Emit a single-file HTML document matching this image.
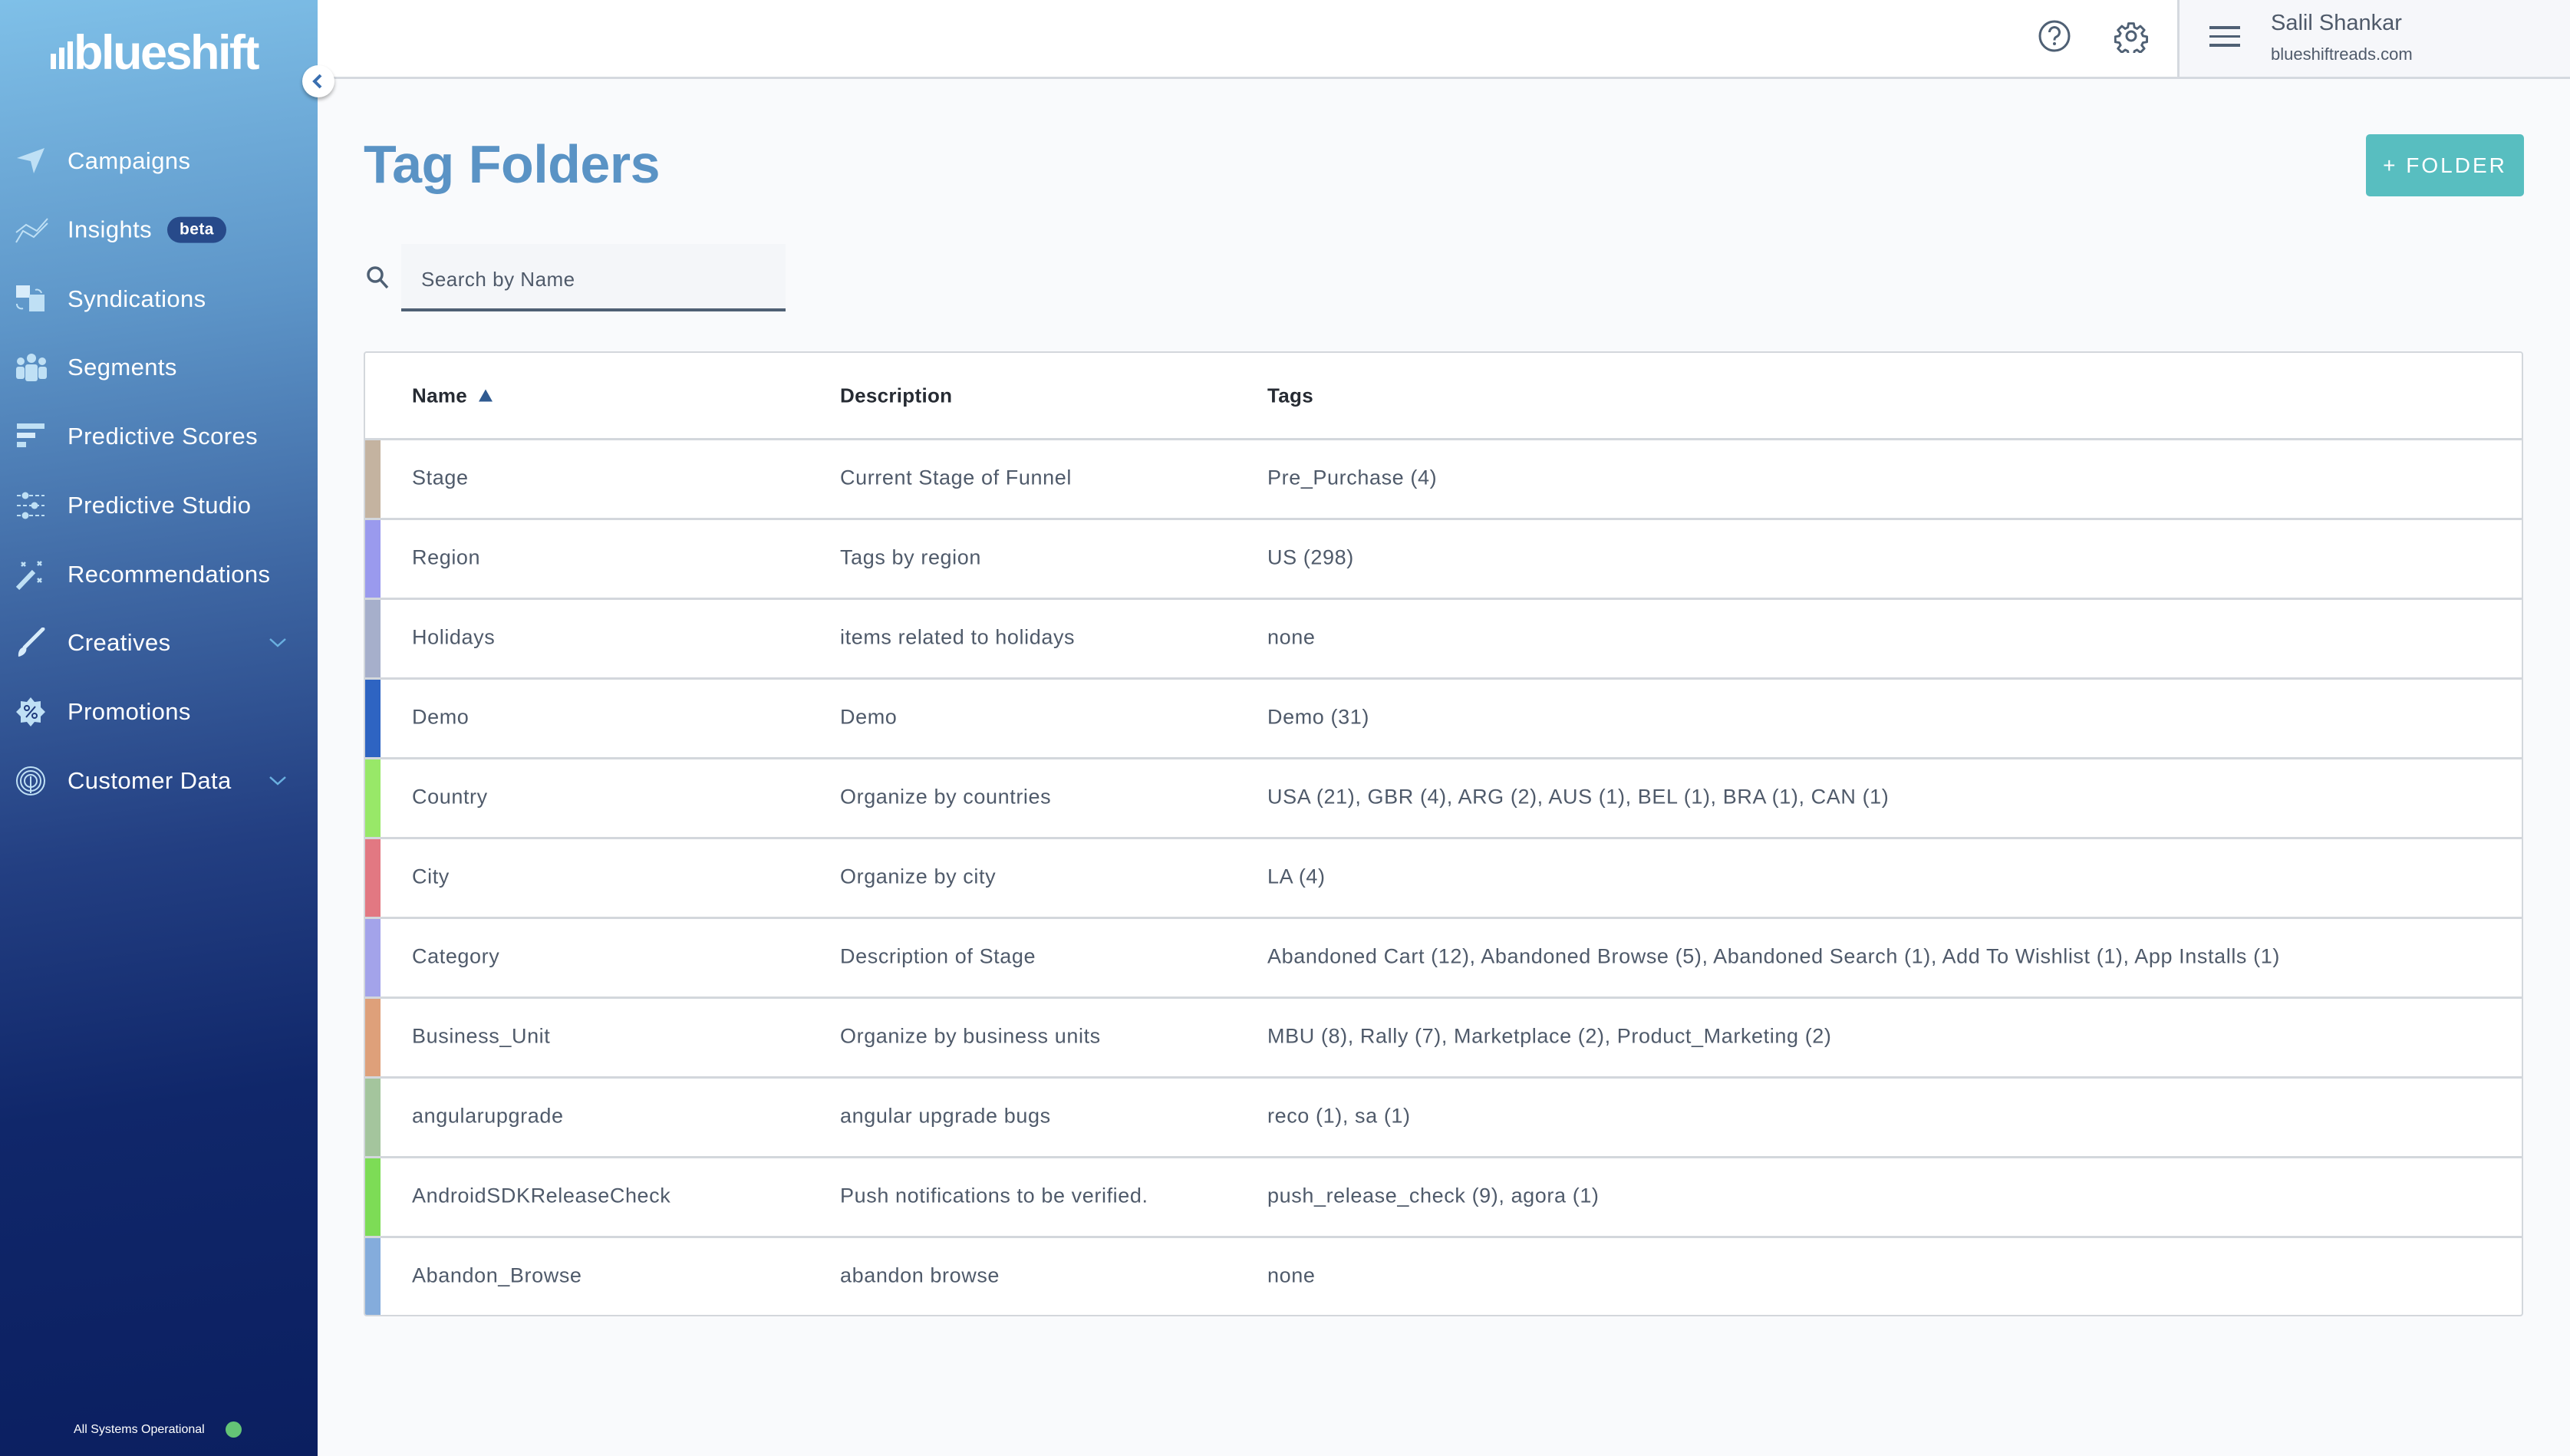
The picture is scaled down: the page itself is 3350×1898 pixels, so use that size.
<!DOCTYPE html>
<html><head><meta charset="utf-8"><style>
*{margin:0;padding:0;box-sizing:border-box}
body{width:3350px;height:1898px;overflow:hidden;background:#f9fafc;font-family:"Liberation Sans",sans-serif;position:relative}
#sb{position:absolute;left:0;top:0;width:414px;height:1898px;background:linear-gradient(172deg,#7fc0e8 0%,#5d95c8 22%,#3f68a4 40%,#233f82 58%,#10276a 75%,#0b1f60 100%)}
.logo{position:absolute;left:66px;top:36px;color:#fff;font-weight:bold;font-size:63px;letter-spacing:-2.5px;line-height:66px}
.bars{display:inline-block;vertical-align:baseline}
.nav{position:absolute;left:0;width:414px;height:60px;color:#fff;font-size:31px;letter-spacing:0.4px}
.nav .t{position:absolute;left:88px;top:50%;transform:translateY(-50%);white-space:nowrap}
.nav svg{position:absolute;left:20px;top:50%;transform:translateY(-50%)}
.chev{position:absolute;left:350px;top:50%;transform:translateY(-50%)}
.beta{display:inline-block;background:#274a8a;color:#fff;font-weight:bold;font-size:21px;padding:5px 16px;border-radius:20px;margin-left:20px;vertical-align:middle;position:relative;top:-2px}
#hdr{position:absolute;left:414px;top:0;width:2936px;height:103px;background:#fff;border-bottom:3px solid #d5d9df}
#hr{position:absolute;left:2838px;top:0;width:512px;height:100px;background:#f6f7fa;border-left:3px solid #d5d9df}
.coll{position:absolute;left:394px;top:85px;width:42px;height:42px;border-radius:50%;background:#fff;box-shadow:0 3px 5px rgba(0,0,0,.3)}
h1{position:absolute;left:474px;top:174px;font-size:70px;color:#5a93c5;font-weight:bold;letter-spacing:-0.5px}
.btn{position:absolute;left:3084px;top:175px;width:206px;height:81px;background:#58bec0;border-radius:5px;color:#fff;font-size:28px;letter-spacing:3px;text-align:center;line-height:81px}
.search{position:absolute;left:523px;top:318px;width:501px;height:88px;background:#f4f6f9;border-bottom:4px solid #4f6074}
.search span{position:absolute;left:26px;top:31px;font-size:26px;color:#4f5a6a;letter-spacing:0.5px}
#tbl{position:absolute;left:474px;top:458px;width:2815px;height:1258px;background:#fff;border:2px solid #d3d7dc;border-radius:4px;overflow:hidden}
.row{position:absolute;left:0;width:100%;height:104px;border-top:3px solid #d3d7dc}
.row .s{position:absolute;left:0;top:0;width:20px;height:101px}
.c{position:absolute;top:calc(50% - 2px);transform:translateY(-50%);font-size:27px;color:#4f5a6a;letter-spacing:0.6px;white-space:nowrap}
.c1{left:61px}.c2{left:619px}.c3{left:1176px}
.hd .c{font-weight:bold;color:#262b33;font-size:26px;letter-spacing:0.3px;top:calc(50% + 2px)}
</style></head><body>
<div id="sb">
 <div class="logo"><svg class="bars" width="30" height="40" viewBox="0 0 30 40"><rect x="0" y="20" width="7" height="20" fill="#fff"/><rect x="11" y="12" width="7" height="28" fill="#fff"/><rect x="22" y="4" width="7" height="36" fill="#fff"/></svg>blueshift</div>
 <div class="nav" style="top:180px"><svg width="40" height="40" viewBox="0 0 40 40"><path d="M2 16 L38 3 L24 36 L20 20 Z" fill="#bfe0f5"/></svg><span class="t">Campaigns</span></div>
 <div class="nav" style="top:270px"><svg width="44" height="34" viewBox="0 0 44 34"><path d="M1 33 L10 18 L24 26 L42 8 M1 20 L14 10 L28 18 L42 2" stroke="#bfe0f5" stroke-width="2" fill="none"/></svg><span class="t">Insights<span class="beta">beta</span></span></div>
 <div class="nav" style="top:360px"><svg width="40" height="40" viewBox="0 0 40 40"><rect x="1" y="2" width="18" height="16" fill="#d8ecfa"/><rect x="18" y="14" width="20" height="22" fill="#bfe0f5"/><path d="M26 8 a6 6 0 0 1 8 4 M2 26 a6 6 0 0 0 8 6" stroke="#bfe0f5" stroke-width="2" fill="none"/></svg><span class="t">Syndications</span></div>
 <div class="nav" style="top:449px"><svg width="42" height="38" viewBox="0 0 42 38"><circle cx="21" cy="7" r="6" fill="#bfe0f5"/><circle cx="7" cy="11" r="5" fill="#bfe0f5"/><circle cx="35" cy="11" r="5" fill="#bfe0f5"/><rect x="13" y="15" width="16" height="22" rx="3" fill="#bfe0f5"/><rect x="1" y="18" width="11" height="16" rx="3" fill="#bfe0f5"/><rect x="30" y="18" width="11" height="16" rx="3" fill="#bfe0f5"/></svg><span class="t">Segments</span></div>
 <div class="nav" style="top:539px"><svg width="40" height="34" viewBox="0 0 40 34"><rect x="2" y="0" width="36" height="7" fill="#bfe0f5"/><rect x="2" y="12" width="24" height="7" fill="#d8ecfa"/><rect x="2" y="24" width="12" height="7" fill="#bfe0f5"/></svg><span class="t">Predictive Scores</span></div>
 <div class="nav" style="top:629px"><svg width="40" height="36" viewBox="0 0 40 36"><path d="M2 5H38M2 18H38M2 31H38" stroke="#bfe0f5" stroke-width="2" stroke-dasharray="5 3"/><circle cx="13" cy="5" r="4.5" fill="#bfe0f5"/><circle cx="25" cy="18" r="4.5" fill="#bfe0f5"/><circle cx="13" cy="31" r="4.5" fill="#bfe0f5"/></svg><span class="t">Predictive Studio</span></div>
 <div class="nav" style="top:719px"><svg width="40" height="40" viewBox="0 0 40 40"><path d="M3 38 L24 16" stroke="#bfe0f5" stroke-width="6"/><path d="M8 4l5 5M13 4l-5 5M29 3l5 5M34 3l-5 5M29 25l5 5M34 25l-5 5" stroke="#bfe0f5" stroke-width="2.5"/></svg><span class="t">Recommendations</span></div>
 <div class="nav" style="top:808px"><svg width="40" height="40" viewBox="0 0 40 40"><path d="M12 26 L36 2" stroke="#d8ecfa" stroke-width="5" stroke-linecap="round"/><path d="M4 38 C3 30 8 24 14 26 C16 32 10 37 4 38Z" fill="#d8ecfa"/></svg><span class="t">Creatives</span><svg class="chev" width="24" height="14" viewBox="0 0 24 14" style="left:350px"><path d="M2 2 L12 11 L22 2" stroke="#6ab0e0" stroke-width="2.5" fill="none"/></svg></div>
 <div class="nav" style="top:898px"><svg width="40" height="40" viewBox="0 0 40 40"><path d="M20 1 L25 7 L33 6 L33 14 L39 20 L33 26 L33 34 L25 33 L20 39 L15 33 L7 34 L7 26 L1 20 L7 14 L7 6 L15 7Z" fill="#bfe0f5"/><path d="M14 27 L26 13" stroke="#1e3a7c" stroke-width="2"/><circle cx="15" cy="15" r="3" stroke="#1e3a7c" stroke-width="2" fill="none"/><circle cx="25" cy="25" r="3" stroke="#1e3a7c" stroke-width="2" fill="none"/></svg><span class="t">Promotions</span></div>
 <div class="nav" style="top:988px"><svg width="40" height="40" viewBox="0 0 40 40" fill="none" stroke="#bfe0f5" stroke-width="2"><circle cx="20" cy="20" r="18"/><circle cx="20" cy="20" r="13"/><circle cx="20" cy="20" r="8"/><path d="M20 14 V36"/></svg><span class="t">Customer Data</span><svg class="chev" width="24" height="14" viewBox="0 0 24 14" style="left:350px"><path d="M2 2 L12 11 L22 2" stroke="#6ab0e0" stroke-width="2.5" fill="none"/></svg></div>
 <div style="position:absolute;left:96px;top:1855px;color:#fff;font-size:16px">All Systems Operational</div>
 <div style="position:absolute;left:294px;top:1853px;width:21px;height:21px;border-radius:50%;background:#64c476"></div>
</div>
<div id="hdr"></div>
<div id="hr"></div>
<div class="coll"><svg width="42" height="42" viewBox="0 0 42 42"><path d="M24 13 L16 21 L24 29" stroke="#3a6fb0" stroke-width="4" fill="none"/></svg></div>
<svg style="position:absolute;left:2656px;top:25px" width="44" height="44" viewBox="0 0 44 44"><circle cx="22" cy="22" r="19" stroke="#4f6074" stroke-width="3" fill="none"/><path d="M15.5 17 a6.5 6.5 0 1 1 9 6 c-2 1 -2.5 2 -2.5 4.5" stroke="#4f6074" stroke-width="3" fill="none"/><circle cx="22" cy="32" r="2" fill="#4f6074"/></svg>
<svg style="position:absolute;left:2756px;top:25px" width="44" height="44" viewBox="0 0 44 44"><path d="M18 3h8l1 6 4 2 5-4 6 6-4 5 2 4 6 1v8l-6 1-2 4 4 5-6 6-5-4-4 2-1 6h-8l-1-6-4-2-5 4-6-6 4-5-2-4-6-1v-8l6-1 2-4-4-5 6-6 5 4 4-2z" transform="translate(3 3) scale(0.86)" stroke="#4f6074" stroke-width="3.4" fill="none" stroke-linejoin="round"/><circle cx="22" cy="22" r="6" stroke="#4f6074" stroke-width="3" fill="none"/></svg>
<div style="position:absolute;left:2880px;top:34px;width:40px;height:4px;background:#4f6074"></div>
<div style="position:absolute;left:2880px;top:46px;width:40px;height:3px;background:#4f6074"></div>
<div style="position:absolute;left:2880px;top:57px;width:40px;height:4px;background:#4f6074"></div>
<div style="position:absolute;left:2960px;top:14px;font-size:29px;color:#4f5a6a">Salil Shankar</div>
<div style="position:absolute;left:2960px;top:58px;font-size:22px;color:#4f5a6a">blueshiftreads.com</div>
<h1>Tag Folders</h1>
<div class="btn">+ FOLDER</div>
<svg style="position:absolute;left:476px;top:345px" width="34" height="34" viewBox="0 0 34 34"><circle cx="13" cy="13" r="9" stroke="#4f6074" stroke-width="3.5" fill="none"/><path d="M20 20 L29 30" stroke="#4f6074" stroke-width="3.5"/></svg>
<div class="search"><span>Search by Name</span></div>
<div id="tbl">
 <div class="row hd" style="top:-3px;height:114px;border-top:none"><span class="c c1">Name <svg width="20" height="18" viewBox="0 0 20 18" style="margin-left:6px"><path d="M10 1 L19 17 H1Z" fill="#2f5a90"/></svg></span><span class="c c2">Description</span><span class="c c3">Tags</span></div>
 <div class="row" style="top:111px"><div class="s" style="background:#c4b3a0"></div><span class="c c1">Stage</span><span class="c c2">Current Stage of Funnel</span><span class="c c3">Pre_Purchase (4)</span></div>
 <div class="row" style="top:215px"><div class="s" style="background:#9a9aee"></div><span class="c c1">Region</span><span class="c c2">Tags by region</span><span class="c c3">US (298)</span></div>
 <div class="row" style="top:319px"><div class="s" style="background:#a6afcb"></div><span class="c c1">Holidays</span><span class="c c2">items related to holidays</span><span class="c c3">none</span></div>
 <div class="row" style="top:423px"><div class="s" style="background:#2e64c2"></div><span class="c c1">Demo</span><span class="c c2">Demo</span><span class="c c3">Demo (31)</span></div>
 <div class="row" style="top:527px"><div class="s" style="background:#98e868"></div><span class="c c1">Country</span><span class="c c2">Organize by countries</span><span class="c c3">USA (21), GBR (4), ARG (2), AUS (1), BEL (1), BRA (1), CAN (1)</span></div>
 <div class="row" style="top:631px"><div class="s" style="background:#e27882"></div><span class="c c1">City</span><span class="c c2">Organize by city</span><span class="c c3">LA (4)</span></div>
 <div class="row" style="top:735px"><div class="s" style="background:#a3a3ea"></div><span class="c c1">Category</span><span class="c c2">Description of Stage</span><span class="c c3">Abandoned Cart (12), Abandoned Browse (5), Abandoned Search (1), Add To Wishlist (1), App Installs (1)</span></div>
 <div class="row" style="top:839px"><div class="s" style="background:#dea07a"></div><span class="c c1">Business_Unit</span><span class="c c2">Organize by business units</span><span class="c c3">MBU (8), Rally (7), Marketplace (2), Product_Marketing (2)</span></div>
 <div class="row" style="top:943px"><div class="s" style="background:#a4c59d"></div><span class="c c1">angularupgrade</span><span class="c c2">angular upgrade bugs</span><span class="c c3">reco (1), sa (1)</span></div>
 <div class="row" style="top:1047px"><div class="s" style="background:#7ddc56"></div><span class="c c1">AndroidSDKReleaseCheck</span><span class="c c2">Push notifications to be verified.</span><span class="c c3">push_release_check (9), agora (1)</span></div>
 <div class="row" style="top:1151px"><div class="s" style="background:#84acdc"></div><span class="c c1">Abandon_Browse</span><span class="c c2">abandon browse</span><span class="c c3">none</span></div>
</div>
</body></html>
